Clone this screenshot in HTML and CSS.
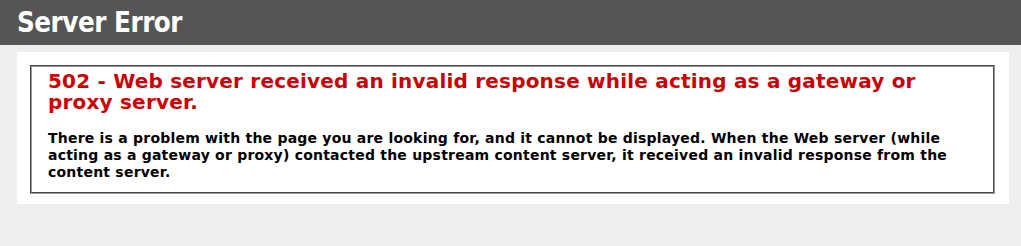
FILE: index.html
```html
<!DOCTYPE html>
<html>
<head>
<meta charset="utf-8">
<title>502 - Web server received an invalid response while acting as a gateway or proxy server.</title>
<link rel="stylesheet" href="styles.css">
</head>
<body>
<div class="header"><h1>Server Error</h1></div>
<div class="content">
  <div class="content-container">
    <fieldset class="box">
      <h2>502 - Web server received an invalid response while acting as a gateway or proxy server.</h2>
      <h3>There is a problem with the page you are looking for, and it cannot be displayed. When the Web server (while acting as a gateway or proxy) contacted the upstream content server, it received an invalid response from the content server.</h3>
    </fieldset>
  </div>
</div>
</body>
</html>
```

FILE: styles.css
```css
body {
  margin: 0;
  background: #eeeeee;
  font-family: "DejaVu Sans", Verdana, sans-serif;
  font-size: 11px;
}
.header {
  background: #555555;
  padding: 6px 17px;
  color: #ffffff;
}
h1 {
  margin: 0;
  font-family: "DejaVu Sans Condensed", "DejaVu Sans", sans-serif;
  font-size: 27.5px;
  line-height: 33px;
  font-weight: bold;
  letter-spacing: -0.5px;
  color: #ffffff;
}
.content {
  margin: 7px 0 0 17px;
}
.content-container {
  background: #ffffff;
  width: 965px;
  padding: 13px 14px 10px 13px;
}
.box {
  margin: 0;
  padding: 4px 15px 11px 16px;
  border: 2px groove #9a9a9a;
}
h2 {
  margin: 0;
  font-size: 20px;
  line-height: 21px;
  letter-spacing: 0.2px;
  color: #cc0000;
  font-weight: bold;
}
h3 {
  margin: 17px 0 0 0;
  font-size: 14px;
  line-height: 17px;
  letter-spacing: 0.22px;
  color: #000000;
  font-weight: bold;
}
```
